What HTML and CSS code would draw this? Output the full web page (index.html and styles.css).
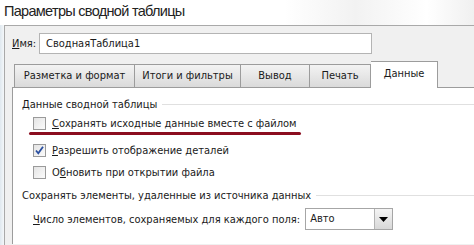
FILE: index.html
```html
<html>
<head>
	<title>Параметры сводной таблицы</title>
	<link rel="stylesheet" href="styles.css">
</head>
<body>
<div class="title">Параметры сводной таблицы</div>
<div class="dialog">
	<div class="namerow">
		<span class="label"><u>И</u>мя:</span>
		<div class="textbox">СводнаяТаблица1</div>
	</div>
	<div class="tabs">
		<div class="tab t1">Разметка и формат</div>
		<div class="tab t2">Итоги и фильтры</div>
		<div class="tab t3">Вывод</div>
		<div class="tab t4">Печать</div>
		<div class="tab active">Данные</div>
	</div>
	<div class="panel">
		<div class="group">
			<span>Данные сводной таблицы</span>
			<div class="rule"></div>
		</div>
		<div class="check first">
			<span class="box"></span>
			<span><u>С</u>охранять исходные данные вместе с файлом</span>
		</div>
		<div class="mark"></div>
		<div class="check second">
			<span class="box">
				<svg width="11" height="11" viewBox="0 0 11 11"><path d="M2 5.5 L4.3 8.3 L9 1.8" fill="none" stroke="#2a4fa0" stroke-width="1.8"/></svg>
			</span>
			<span><u>Р</u>азрешить отображение деталей</span>
		</div>
		<div class="check third">
			<span class="box"></span>
			<span>О<u>б</u>новить при открытии файла</span>
		</div>
		<div class="group lower">
			<span>Сохранять элементы, удаленные из источника данных</span>
			<div class="rule"></div>
		</div>
		<div class="fieldrow">
			<span><u>Ч</u>исло элементов, сохраняемых для каждого поля:</span>
			<div class="combo">
				<span class="value">Авто</span>
				<span class="drop"><svg width="9" height="5" viewBox="0 0 9 5"><path d="M0 0 H9 L4.5 5 Z" fill="#000"/></svg></span>
			</div>
		</div>
	</div>
</div>
</body>
</html>
```
FILE: styles.css
```css
body, html {
	margin: 0;
	height: 100%;
	overflow: hidden;
}
* {
	box-sizing: border-box;
}
body {
	background: linear-gradient(90deg, #dfe8ef 0, #f4f7f9 4px, #fff 4px);
	font-family: "DejaVu Sans Condensed", "DejaVu Sans", sans-serif;
	font-size: 11px;
	color: #1a1a1a;
}
.title {
	height: 25px;
	padding-left: 4px;
	font-family: "Liberation Sans", sans-serif;
	font-size: 14.5px;
	letter-spacing: -0.7px;
	line-height: 22px;
	color: #222;
	background: linear-gradient(90deg, #fff 0%, #fff 60%, #f2f2f2 75%, #fff 90%, #f0f0f0 100%);
}
.dialog {
	margin-left: 4px;
	height: 220px;
	border-top: 1px solid #a9a9a9;
	border-left: 1px solid #a9a9a9;
	background: #f0f0f0;
	padding: 7px 0 0 7px;
}
.namerow {
	display: flex;
	align-items: center;
	height: 21px;
}
.label {
	width: 27px;
}
.textbox {
	width: 333px;
	height: 21px;
	line-height: 19px;
	padding-left: 6px;
	border: 1px solid #b4b4b4;
	background: #fff;
}
.tabs {
	display: flex;
	align-items: flex-end;
	margin: 7px 0 0 2px;
	height: 26px;
	position: relative;
	z-index: 1;
	white-space: nowrap;
}
.tab {
	height: 23px;
	line-height: 22px;
	text-align: center;
	border: 1px solid #9c9c9c;
	border-bottom: none;
	border-right: none;
	background: linear-gradient(#f3f3f3, #dadada);
}
.t1 { width: 120px; }
.t2 { width: 106px; }
.t3 { width: 69px; }
.t4 { width: 62px; border-right: 1px solid #9c9c9c; }
.tab.active {
	width: 67px;
	height: 27px;
	line-height: 24px;
	background: #fff;
	border-left: none;
	border-right: 1px solid #9c9c9c;
	border-top: 1px solid #9c9c9c;
	margin-bottom: -1px;
}
.panel {
	height: 157px;
	background: #fff;
	border-top: 1px solid #9c9c9c;
	border-left: 1px solid #9c9c9c;
	padding: 8px 0 0 9px;
}
.group {
	display: flex;
	align-items: center;
	height: 16px;
}
.group.lower {
	margin-top: 5px;
}
.rule {
	flex: 1;
	height: 1px;
	margin-left: 5px;
	background: #e0e0e0;
}
.check {
	display: flex;
	align-items: center;
	height: 20px;
	margin-left: 11px;
}
.check.first {
	margin-top: 1px;
}
.check.second {
	margin-top: 5px;
}
.check.third {
	margin-top: 2px;
}
.box {
	width: 13px;
	height: 13px;
	border: 1px solid #9a9a9a;
	background: linear-gradient(135deg, #e4e4e4, #fbfbfb);
	margin-right: 6px;
	display: flex;
	align-items: center;
	justify-content: center;
}
.mark {
	width: 272px;
	height: 3px;
	margin: -1px 0 0 7px;
	background: #8b0d1f;
	border-radius: 2px;
}
.fieldrow {
	display: flex;
	align-items: center;
	margin: 5px 0 0 11px;
}
.combo {
	display: flex;
	width: 88px;
	height: 22px;
	margin-left: 5px;
	border: 1px solid #a6a6a6;
	background: #fff;
}
.value {
	flex: 1;
	line-height: 20px;
	padding-left: 4px;
}
.drop {
	width: 18px;
	border-left: 1px solid #b4b4b4;
	background: linear-gradient(#f4f4f4, #d8d8d8);
	display: flex;
	align-items: center;
	justify-content: center;
}
```
